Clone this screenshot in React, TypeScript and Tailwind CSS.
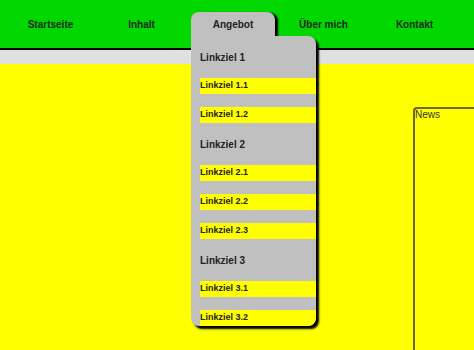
import React from 'react';

const navItems = ['Startseite', 'Inhalt', 'Angebot', 'Über mich', 'Kontakt'];

const groups = [
  { title: 'Linkziel 1', links: ['Linkziel 1.1', 'Linkziel 1.2'] },
  { title: 'Linkziel 2', links: ['Linkziel 2.1', 'Linkziel 2.2', 'Linkziel 2.3'] },
  { title: 'Linkziel 3', links: ['Linkziel 3.1', 'Linkziel 3.2'] },
];

function DropdownPanel() {
  return (
    <div className="absolute left-0 top-[24px] w-[125px] bg-[#c0c0c0] rounded-tr-[8px] rounded-b-[8px] shadow-[3px_3px_2px_#000] overflow-hidden flex flex-col gap-[13px] pt-[13px] pl-[9px] z-20">
      {groups.map((g) => (
        <React.Fragment key={g.title}>
          <div className="h-[16px] flex items-center text-[10px] font-bold text-[#222]">{g.title}</div>
          {g.links.map((l) => (
            <a
              key={l}
              href="#"
              className="h-[16px] flex items-center bg-[#ffff00] text-[9px] font-bold text-[#222]"
            >
              {l}
            </a>
          ))}
        </React.Fragment>
      ))}
    </div>
  );
}

export default function App() {
  return (
    <div className="w-[474px] h-[350px] overflow-hidden bg-[#ffff00] flex flex-col font-['Liberation_Sans',Arial,sans-serif]">
      <nav className="h-[50px] shrink-0 bg-[#00d800] border-b-2 border-black flex pl-[5px] relative z-10">
        {navItems.map((item) =>
          item === 'Angebot' ? (
            <div key={item} className="relative w-[91px] h-full">
              <div className="absolute left-[4px] top-[12px] w-[84px] h-[38px] bg-[#c0c0c0] rounded-t-[8px] shadow-[3px_1px_2px_#000]">
                <div className="h-[24px] flex items-center justify-center text-[10px] font-bold text-[#222]">
                  {item}
                </div>
                <DropdownPanel />
              </div>
            </div>
          ) : (
            <a
              key={item}
              href="#"
              className="w-[91px] h-full flex items-center justify-center text-[10px] font-bold text-[#1c2a1c]"
            >
              {item}
            </a>
          )
        )}
      </nav>
      <div className="h-[14px] shrink-0 bg-[#e0e0e0]" />
      <div className="flex-1 flex justify-end">
        <div className="mt-[43px] w-[61px] border-l-2 border-t-2 border-[#6b6633] rounded-tl-[4px]">
          <span className="block text-[10px] leading-[12px] text-[#333]">News</span>
        </div>
      </div>
    </div>
  );
}
